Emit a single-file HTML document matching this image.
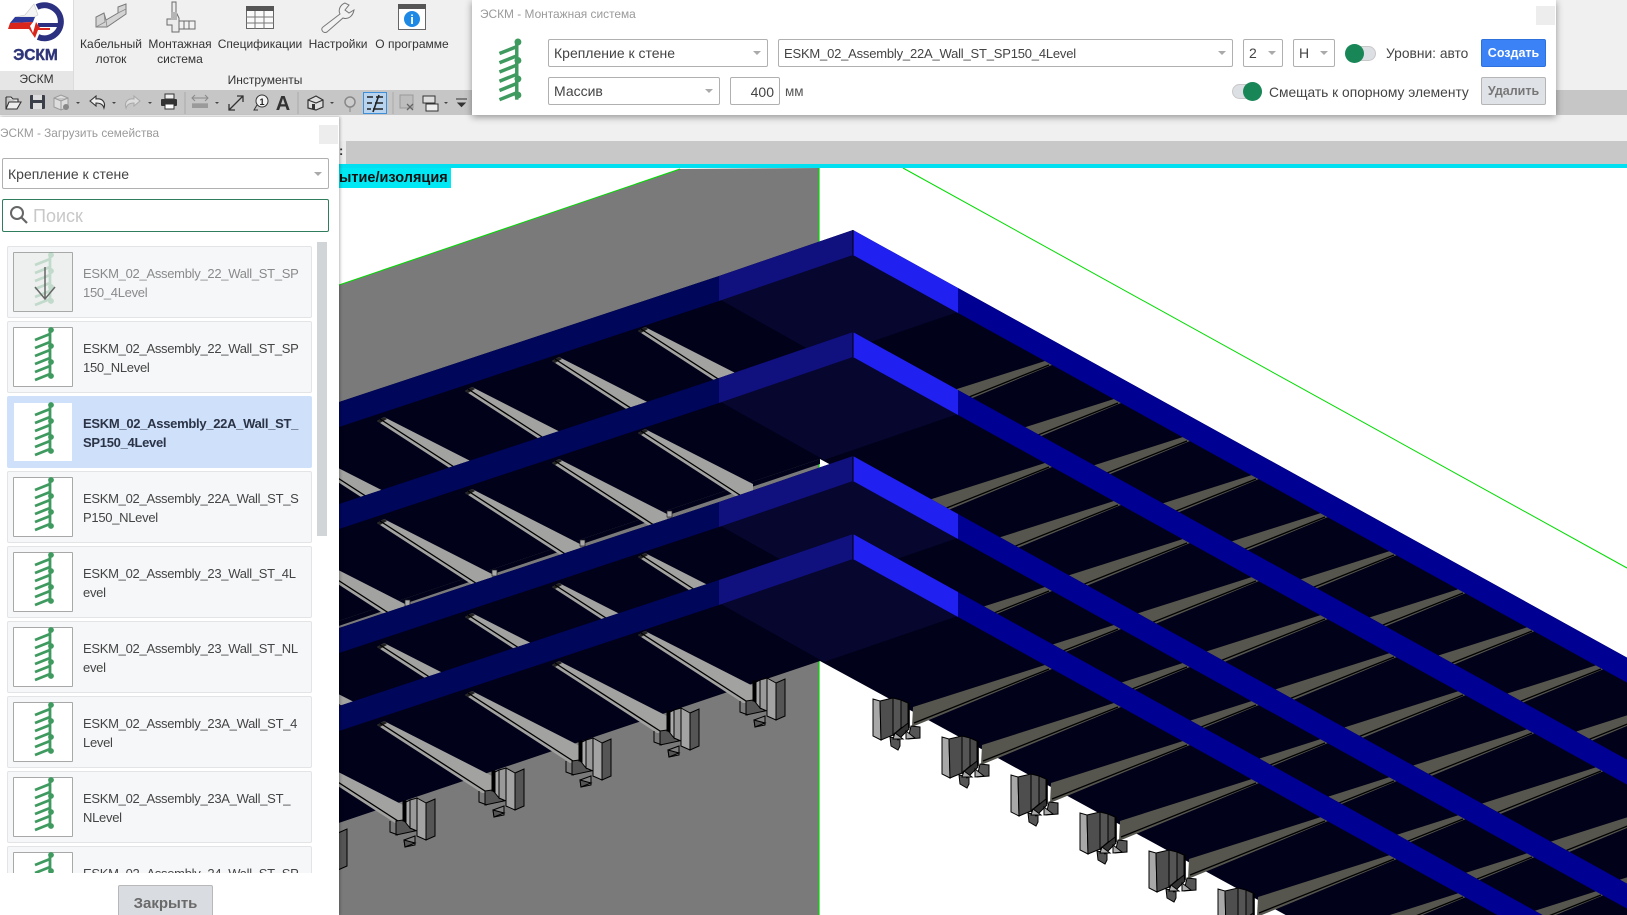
<!DOCTYPE html>
<html lang="ru"><head><meta charset="utf-8"><title>ЭСКМ</title>
<style>
html,body{margin:0;padding:0;width:1627px;height:915px;overflow:hidden;background:#f0f0f0}
body{position:relative;font-family:"Liberation Sans","Noto Sans CJK SC",sans-serif;color:#333}
.a{position:absolute}
.t{position:absolute;white-space:nowrap;line-height:16px}
.c{text-align:center}
.rb{font-size:12px;color:#333}
.box{position:absolute;box-sizing:border-box;background:#fff;border:1px solid #b0b0b0;border-radius:2px;font-size:14px;color:#444;white-space:nowrap;overflow:hidden}
.car{position:absolute;width:0;height:0;border-left:4px solid transparent;border-right:4px solid transparent;border-top:4px solid #aaa}
.it{position:absolute;left:7px;width:305px;height:72px;box-sizing:border-box;background:#f6f7f9;border:1px solid #e3e4e6;border-radius:2px;overflow:hidden}
.it .th{position:absolute;left:5px;top:5px;width:60px;height:60px;box-sizing:border-box;background:#fff;border:1px solid #a8a8a8;border-radius:1px}
.it .tx{position:absolute;left:75px;top:18px;font-size:13px;letter-spacing:-.29px;line-height:18.7px;color:#444;white-space:nowrap}
.it svg{position:absolute;left:24px;top:4px}
</style></head>
<body>
<svg class="a" style="left:0;top:0" width="1627" height="915" viewBox="0 0 1627 915">
<defs>
<g id="lr"><polygon points="7,3 115,58 115,75 105,75 0,7" fill="#a2a2a0"/><polygon points="0,7 7,3 10,5 3,9" fill="#222"/><polyline points="3,5 108,73" stroke="#000" stroke-width="1.3" fill="none"/></g>
<g id="rr"><polygon points="40,9 172,-33 179,-29 39,29" fill="#56564e"/><polyline points="41,25 176,-29" stroke="#000" stroke-width="1.3" fill="none"/></g>
<g id="lrow">
<use href="#lr" x="638" y="628"/><use href="#lr" x="552" y="658"/><use href="#lr" x="465" y="688"/><use href="#lr" x="377" y="718"/><use href="#lr" x="290" y="748"/><use href="#lr" x="203" y="778"/>
</g>
<g id="rrow">
<use href="#rr" x="873" y="698"/><use href="#rr" x="942" y="736"/><use href="#rr" x="1011" y="774"/><use href="#rr" x="1080" y="812"/><use href="#rr" x="1149" y="850"/><use href="#rr" x="1218" y="888"/><use href="#rr" x="1287" y="926"/><use href="#rr" x="1356" y="964"/><use href="#rr" x="1425" y="1002"/><use href="#rr" x="1494" y="1040"/><use href="#rr" x="1563" y="1078"/><use href="#rr" x="1632" y="1116"/>
</g>
<g id="lvl">
<polygon points="300,719 719,580 853,534 1700,1002 1700,1141 820,661 300,836" fill="#010119"/>
<use href="#lrow"/><use href="#rrow"/>
<polygon points="853,559 958,616 824,662 719,603" fill="#06062e"/>
<polygon points="300,719 719,580 719,605 300,744" fill="#00065a"/>
<polygon points="719,580 853,534 853,559 719,605" fill="#10107e"/>
<polygon points="853,534 958,592 958,617 853,559" fill="#2020f0"/>
<polygon points="958,592 1700,1002 1700,1027 958,617" fill="#000092"/>
<line x1="853" y1="534" x2="853" y2="559" stroke="#000" stroke-width="1"/>
</g>
<g id="lb" stroke="#000" stroke-width="1">
<polygon points="-7,18 0,17 12,28 -7,32" fill="#555"/>
<polyline points="-13,18 -13,29 -5,32" fill="none"/>
<polygon points="1,37 12,33 12,42 2,44" fill="#808080"/>
<polygon points="1,37 12,40 2,44" fill="#555"/>
<polygon points="3,-1 7,-3 7,25 3,20" fill="#aaa"/>
<polygon points="7,-3 14,-5 14,28 7,25" fill="#999"/>
<polygon points="14,-5 23,0 23,37 14,33" fill="#a3a3a3"/>
<polygon points="23,0 32,-4 32,33 23,37" fill="#555"/>
<rect x="0" y="-2" width="3" height="20" fill="#000"/>
</g>
<g id="rbk" stroke="#000" stroke-width="1">
<polygon points="17,39 27,41 27,48 25,52 18,48" fill="#555"/>
<polygon points="38,28 47,29 47,40 35,41" fill="#555"/>
<polygon points="0,1 7,3 8,42 0,38" fill="#a8a8a8"/>
<polygon points="7,3 20,0 20,37 8,42" fill="#4e4e4e"/>
<polygon points="20,0 28,2 28,30 20,37" fill="#555"/>
<polygon points="28,2 35,5 35,27 28,30" fill="#4a4a4a"/>
<polygon points="20,37 35,25 36,31 25,42" fill="#333"/>
<polygon points="22,35 30,41 20,41" fill="#aaa"/>
<polygon points="33,33 42,40 33,41" fill="#aaa"/>
<line x1="36" y1="5" x2="36" y2="30" stroke-width="1.6"/>
</g>
</defs>
<rect x="0" y="168" width="1627" height="747" fill="#fff"/>
<polygon points="339,285 680,169 819,168 819,915 339,915" fill="#7a7a7a"/>
<polyline points="339,285 680,169" stroke="#00dc00" stroke-width="1" fill="none"/>
<line x1="819" y1="168" x2="819" y2="915" stroke="#00dc00" stroke-width="1.2"/>
<line x1="903" y1="168" x2="1627" y2="568" stroke="#00dc00" stroke-width="1"/>
<use href="#lvl" y="-304"/>
<polygon points="300,634 820,459 820,464 300,639" fill="#010119"/>
<use href="#lvl" y="-202"/>
<g fill="#aaa" stroke="#222" stroke-width=".7"><rect x="405" y="600" width="5" height="6"/><rect x="492" y="570" width="5" height="6"/><rect x="580" y="540" width="5" height="6"/><rect x="667" y="511" width="5" height="6"/></g>
<use href="#lvl" y="-78"/>
<use href="#lvl"/>
<use href="#lb" x="315" y="833"/><use href="#lb" x="403" y="803"/><use href="#lb" x="492" y="773"/><use href="#lb" x="579" y="743"/><use href="#lb" x="667" y="713"/><use href="#lb" x="753" y="683"/>
<use href="#rbk" x="873" y="698"/><use href="#rbk" x="942" y="736"/><use href="#rbk" x="1011" y="774"/><use href="#rbk" x="1080" y="812"/><use href="#rbk" x="1149" y="850"/><use href="#rbk" x="1218" y="888"/>
</svg>

<!-- chrome strips -->
<div class="a" style="left:0;top:0;width:1627px;height:90px;background:#f0f0f0"></div>
<div class="a" style="left:0;top:90px;width:1627px;height:25px;background:#c6c6c6"></div>
<div class="a" style="left:0;top:115px;width:1627px;height:26px;background:#f0f0f0"></div>
<div class="a" style="left:339px;top:141px;width:1288px;height:23px;background:#c8c8c8"></div>
<div class="a" style="left:339px;top:141px;width:7px;height:23px;background:#ececec"></div>
<div class="a" style="left:0;top:164px;width:1627px;height:4px;background:#00e0f0"></div>
<div class="a" style="left:339px;top:168px;width:112px;height:20px;background:#00e8f4"></div>
<div class="t" style="left:339px;top:170px;font-size:14.5px;font-weight:bold;color:#111">ытие/изоляция</div>
<div class="t" style="left:339px;top:143px;font-size:13px;font-weight:bold;color:#333">:</div>

<!-- ribbon -->
<div class="a" style="left:0;top:0;width:73px;height:71px;background:#fff"></div>
<div class="a" style="left:0;top:71px;width:73px;height:19px;background:#e6e6e6"></div>
<div class="a" style="left:73px;top:0;width:1px;height:90px;background:#dcdcdc"></div>
<div class="t rb c" style="left:0;top:71px;width:73px">ЭСКМ</div>
<div class="t rb c" style="left:70px;top:36px;width:82px">Кабельный</div>
<div class="t rb c" style="left:70px;top:51px;width:82px">лоток</div>
<div class="t rb c" style="left:140px;top:36px;width:80px">Монтажная</div>
<div class="t rb c" style="left:140px;top:51px;width:80px">система</div>
<div class="t rb c" style="left:215px;top:36px;width:90px">Спецификации</div>
<div class="t rb c" style="left:300px;top:36px;width:76px">Настройки</div>
<div class="t rb c" style="left:369px;top:36px;width:86px">О программе</div>
<div class="t rb c" style="left:200px;top:72px;width:130px">Инструменты</div>

<svg class="a" style="left:0;top:0" width="472" height="116" viewBox="0 0 472 116">
<!-- logo -->
<path d="M37 7 A16.500 16.500 0 1 1 38 37" fill="none" stroke="#2b3080" stroke-width="6"/>
<path d="M38 25 H60" stroke="#2b3080" stroke-width="4"/>
<polygon points="15,17 25,15 34,4 38,15 34,17" fill="#f4f4f4" stroke="#c8c8c8" stroke-width=".6"/>
<polygon points="15,17 35,17 33,22 10,23" fill="#2d3a9a"/>
<polygon points="10,23 33,22 30,26 33,33 36,22 40,28 50,28 50,30 38,30 35,38 29,29 8,29" fill="#d8261c"/>
<text x="35.500" y="60" text-anchor="middle" font-family="Liberation Sans,sans-serif" font-weight="bold" font-size="15.500" fill="#2e3578" stroke="#2e3578" stroke-width=".4">ЭСКМ</text>
<!-- tray -->
<path d="M96 27 L96 17 L104 13 L106 20 L118 13 L118 7 L126 4 L126 14 L107 27 Z" fill="#d4d4d4" stroke="#7a7a7a" stroke-width="1"/>
<path d="M104 13 L105 22 L96 27 M106 20 L107 27 M118 13 L126 9" fill="none" stroke="#8a8a8a" stroke-width=".8"/>
<!-- assembly -->
<path d="M172 2 H176 V12 L179 18 V32 H172 V25 H167 V19 H172 V12 Z" fill="#ececec" stroke="#6a6a6a" stroke-width="1"/>
<rect x="179" y="21" width="16" height="8" fill="#f2f2f2" stroke="#6a6a6a"/>
<path d="M184 21 V29 M189 21 V29" stroke="#6a6a6a"/>
<rect x="171" y="12" width="6" height="8" fill="#b5b5b5"/>
<!-- table -->
<rect x="246.500" y="6.500" width="27" height="22" fill="#fafafa" stroke="#666"/>
<rect x="246" y="6" width="28" height="5" fill="#555"/>
<path d="M246 17 H274 M246 23 H274 M255 11 V29 M264 11 V29" stroke="#777" stroke-width="1"/>
<!-- wrench -->
<path d="M345 3 C340 5 338 10 340 14 L323 27 C320 29 323 34 327 32 L343 18 C348 20 353 16 354 10 L349 13 L345 10 L349 5 Z" fill="#f2f2f2" stroke="#777" stroke-width="1"/>
<!-- info -->
<rect x="398.500" y="4.500" width="27" height="25" fill="#fff" stroke="#666"/>
<rect x="398" y="4" width="28" height="5" fill="#555"/>
<circle cx="412" cy="19" r="8" fill="#1e88e5"/>
<text x="412" y="24" text-anchor="middle" font-family="Liberation Sans,sans-serif" font-weight="bold" font-size="13" fill="#fff">i</text>
<!-- QAT -->
<path d="M6 97 H11 L13 99 H18 V102 M6 97 V109 H17 L21 102 H9 L6 109" fill="#eee" stroke="#333" stroke-width="1.1"/>
<rect x="30" y="95" width="15" height="14" rx="1" fill="#3a3f4a"/><rect x="33" y="95" width="9" height="5" fill="#ddd"/><rect x="33" y="103" width="9" height="6" fill="#ddd"/>
<path d="M54 98 L61 95 L68 98 V107 L61 110 L54 107 Z M54 98 L61 101 L68 98 M61 101 V110" fill="#ddd" stroke="#9a9a9a"/>
<circle cx="66" cy="107" r="3" fill="#888"/>
<path d="M90 101 L96 96 V99 C102 98 106 102 104 108 C103 104 100 103 96 103 V106 Z" fill="#eee" stroke="#333" stroke-width="1.1"/>
<path d="M140 101 L134 96 V99 C128 98 124 102 126 108 C127 104 130 103 134 103 V106 Z" fill="#ddd" stroke="#aaa" stroke-width="1.1"/>
<rect x="165" y="94" width="9" height="5" fill="#eee" stroke="#333"/><rect x="161" y="99" width="16" height="7" rx="1" fill="#333"/><rect x="165" y="104" width="9" height="5" fill="#fff" stroke="#333"/>
<path d="M76 102 h4 l-2 2z M112 102 h4 l-2 2z M148 102 h4 l-2 2z M215 102 h4 l-2 2z M330 102 h4 l-2 2z M444 102 h4 l-2 2z" fill="#444"/>
<path d="M185 92 V114 M298 92 V114 M393 92 V114" stroke="#aaa"/>
<path d="M192 98 H208 M192 104 H208 M195 95 L192 98 L195 101 M205 95 L208 98 L205 101" fill="none" stroke="#8a8a8a"/><rect x="192" y="104" width="16" height="4" fill="#9a9a9a"/>
<path d="M229 110 L243 96 M237 96 H243 V102 M229 104 V110 H235" fill="none" stroke="#333" stroke-width="1.3"/>
<circle cx="262" cy="101" r="6" fill="#f2f2f2" stroke="#333"/><path d="M257 105 L254 110 H258" fill="none" stroke="#333"/>
<text x="262" y="105" text-anchor="middle" font-family="Liberation Sans,sans-serif" font-size="9" font-weight="bold" fill="#222">1</text>
<text x="283" y="110" text-anchor="middle" font-family="Liberation Sans,sans-serif" font-size="20" font-weight="bold" fill="#333">A</text>
<path d="M316 96 L308 100 V108 L316 110 L323 107 V100 Z M308 100 L316 103 L323 100" fill="#ddd" stroke="#333" stroke-width="1.2"/><rect x="312" y="104" width="3" height="5" fill="#333"/>
<circle cx="350" cy="102" r="5" fill="#ccc" stroke="#888" stroke-width="1.5"/><path d="M350 107 V112" stroke="#888"/>
<rect x="363.500" y="92.500" width="23" height="21" fill="#b9d4ef" stroke="#3f8fd8"/>
<path d="M367 97 H373 M367 103 H372 M367 109 H371 M376 97 H383 M375 103 H383 M373 109 H383 M379 95 L373 112" stroke="#222" stroke-width="1.6"/>
<rect x="400" y="95" width="13" height="13" fill="#bdbdbd" stroke="#999"/><path d="M407 104 L413 110 M413 104 L407 110" stroke="#666" stroke-width="1.3"/>
<rect x="423" y="96" width="12" height="7" fill="#ddd" stroke="#333"/><rect x="426" y="104" width="12" height="7" fill="#eee" stroke="#333"/>
<path d="M456 99 H467 M458 103 h7 l-3.500 3.500z" fill="#333" stroke="#333"/>
</svg>

<!-- right dialog -->
<div class="a" style="left:472px;top:0;width:1084px;height:115px;background:#fff;box-shadow:0 2px 7px rgba(0,0,0,.4)">
  <div class="t" style="left:8px;top:6px;font-size:11.900px;color:#9a9a9a">ЭСКМ - Монтажная система</div>
  <div class="a" style="left:1064px;top:6px;width:19px;height:19px;background:#ededed"></div>
  <svg class="a" style="left:24px;top:38px" width="30" height="68" viewBox="0 0 26 56"><g stroke="#3f9a5f" stroke-width="3" fill="#3f9a5f"><line x1="18" y1="1" x2="18" y2="52"/><line x1="3" y1="12" x2="18" y2="6"/><line x1="3" y1="20" x2="18" y2="14"/><line x1="3" y1="28" x2="18" y2="22"/><line x1="3" y1="36" x2="18" y2="30"/><line x1="3" y1="44" x2="18" y2="38"/><line x1="3" y1="52" x2="18" y2="46"/><circle cx="19" cy="2" r="1.500"/><circle cx="19" cy="18" r="1.500"/><circle cx="19" cy="34" r="1.500"/><circle cx="19" cy="48" r="1.500"/></g></svg>
  <div class="box" style="left:76px;top:39px;width:220px;height:28px;padding:5px 5px;line-height:17px">Крепление к стене<span class="car" style="right:6px;top:11px"></span></div>
  <div class="box" style="left:306px;top:39px;width:455px;height:28px;padding:5px 5px;line-height:17px;font-size:13px;letter-spacing:-.2px">ESKM_02_Assembly_22A_Wall_ST_SP150_4Level<span class="car" style="right:6px;top:11px"></span></div>
  <div class="box" style="left:771px;top:39px;width:40px;height:28px;padding:5px 5px;line-height:17px">2<span class="car" style="right:6px;top:11px"></span></div>
  <div class="box" style="left:821px;top:39px;width:42px;height:28px;padding:5px 5px;line-height:17px">Н<span class="car" style="right:6px;top:11px"></span></div>
  <div class="a" style="left:874px;top:46px;width:30px;height:15px;border-radius:8px;background:#dcdfe3;border:1px solid #c8c8c8;box-sizing:border-box"></div>
  <div class="a" style="left:873px;top:44px;width:19px;height:19px;border-radius:50%;background:#188656"></div>
  <div class="t" style="left:914px;top:46px;font-size:13.800px;color:#444">Уровни: авто</div>
  <div class="a" style="left:1009px;top:39px;width:65px;height:28px;box-sizing:border-box;background:#3b82f6;border:1px solid #2e70dc;border-radius:2px;color:#fff;font-size:12.500px;font-weight:bold;text-align:center;line-height:26px">Создать</div>
  <div class="box" style="left:76px;top:77px;width:172px;height:28px;padding:5px 5px;line-height:17px">Массив<span class="car" style="right:6px;top:11px"></span></div>
  <div class="box" style="left:258px;top:77px;width:50px;height:28px;padding:6px 5px 0 0;line-height:17px;text-align:right">400</div>
  <div class="t" style="left:313px;top:84px;font-size:13.500px;color:#555">мм</div>
  <div class="a" style="left:760px;top:84px;width:30px;height:15px;border-radius:8px;background:#dcdfe3;border:1px solid #c8c8c8;box-sizing:border-box"></div>
  <div class="a" style="left:771px;top:82px;width:19px;height:19px;border-radius:50%;background:#188656"></div>
  <div class="t" style="left:797px;top:85px;font-size:13.800px;color:#444">Смещать к опорному элементу</div>
  <div class="a" style="left:1009px;top:77px;width:65px;height:28px;box-sizing:border-box;background:#dfe2e6;border:1px solid #b5b5b5;border-radius:2px;color:#777;font-size:12.500px;font-weight:bold;text-align:center;line-height:26px">Удалить</div>
</div>

<!-- left dialog -->
<div class="a" style="left:0;top:117px;width:339px;height:798px;background:#fff;box-shadow:1px 0 3px rgba(0,0,0,.3);overflow:hidden">
  <div class="t" style="left:0;top:8px;font-size:11.800px;color:#9a9a9a">ЭСКМ - Загрузить семейства</div>
  <div class="a" style="left:319px;top:8px;width:19px;height:19px;background:#ededed"></div>
  <div class="box" style="left:2px;top:41px;width:327px;height:31px;padding:6px 5px;line-height:18px;font-size:14px">Крепление к стене<span class="car" style="right:6px;top:13px"></span></div>
  <div class="box" style="left:2px;top:82px;width:327px;height:33px;border-color:#2f7d5c"></div>
  <svg class="a" style="left:9px;top:88px" width="20" height="20" viewBox="0 0 20 20"><circle cx="8" cy="8" r="6" fill="none" stroke="#666" stroke-width="2"/><line x1="12.500" y1="12.500" x2="18" y2="18" stroke="#666" stroke-width="2.200"/></svg>
  <div class="t" style="left:33px;top:89px;font-size:18px;line-height:20px;color:#c8c8c8">Поиск</div>
  <div class="a" style="left:317px;top:125px;width:10px;height:294px;background:#d2d5d8"></div>

  <div class="a" style="left:0;top:125px;width:315px;height:631px;overflow:hidden">
    <svg width="0" height="0" style="position:absolute"><defs><g id="ic" stroke="#3f9a5f" stroke-width="2.800" fill="#3f9a5f"><line x1="18" y1="2" x2="18" y2="50"/><line x1="3" y1="12" x2="18" y2="6"/><line x1="3" y1="20" x2="18" y2="14"/><line x1="3" y1="28" x2="18" y2="22"/><line x1="3" y1="36" x2="18" y2="30"/><line x1="3" y1="44" x2="18" y2="38"/><line x1="3" y1="52" x2="18" y2="46"/><circle cx="19" cy="2" r="1.500"/><circle cx="19" cy="18" r="1.500"/><circle cx="19" cy="34" r="1.500"/><circle cx="19" cy="48" r="1.500"/></g></defs></svg>
    <div class="it" style="top:4px"><div class="th" style="background:#eef0f0"></div><svg width="26" height="60" viewBox="0 0 26 56" style="opacity:.25"><use href="#ic"/></svg><svg width="26" height="60" viewBox="0 0 26 56"><path d="M13 14 V46 M3 34 L13 46 L23 34" fill="none" stroke="#666" stroke-width="1.500"/></svg><div class="tx" style="color:#8a8a8a">ESKM_02_Assembly_22_Wall_ST_SP<br>150_4Level</div></div>
    <div class="it" style="top:79px"><div class="th"></div><svg width="26" height="60" viewBox="0 0 26 56"><use href="#ic"/></svg><div class="tx">ESKM_02_Assembly_22_Wall_ST_SP<br>150_NLevel</div></div>
    <div class="it" style="top:154px;background:#cfe0fb;border-color:#cfe0fb"><div class="th" style="border-color:#cfe0fb"></div><svg width="26" height="60" viewBox="0 0 26 56"><use href="#ic"/></svg><div class="tx" style="font-weight:bold;color:#2b3446">ESKM_02_Assembly_22A_Wall_ST_<br>SP150_4Level</div></div>
    <div class="it" style="top:229px"><div class="th"></div><svg width="26" height="60" viewBox="0 0 26 56"><use href="#ic"/></svg><div class="tx">ESKM_02_Assembly_22A_Wall_ST_S<br>P150_NLevel</div></div>
    <div class="it" style="top:304px"><div class="th"></div><svg width="26" height="60" viewBox="0 0 26 56"><use href="#ic"/></svg><div class="tx">ESKM_02_Assembly_23_Wall_ST_4L<br>evel</div></div>
    <div class="it" style="top:379px"><div class="th"></div><svg width="26" height="60" viewBox="0 0 26 56"><use href="#ic"/></svg><div class="tx">ESKM_02_Assembly_23_Wall_ST_NL<br>evel</div></div>
    <div class="it" style="top:454px"><div class="th"></div><svg width="26" height="60" viewBox="0 0 26 56"><use href="#ic"/></svg><div class="tx">ESKM_02_Assembly_23A_Wall_ST_4<br>Level</div></div>
    <div class="it" style="top:529px"><div class="th"></div><svg width="26" height="60" viewBox="0 0 26 56"><use href="#ic"/></svg><div class="tx">ESKM_02_Assembly_23A_Wall_ST_<br>NLevel</div></div>
    <div class="it" style="top:604px;height:40px"><div class="th"></div><svg width="26" height="60" viewBox="0 0 26 56"><use href="#ic"/></svg><div class="tx" style="height:19px;overflow:hidden">ESKM_02_Assembly_24_Wall_ST_SP</div></div>
  </div>
  <div class="a" style="left:118px;top:768px;width:95px;height:30px;box-sizing:border-box;background:#d9dde1;border:1px solid #b8b8b8;border-bottom:0;border-radius:2px 2px 0 0;color:#6a6a6a;font-size:15px;font-weight:bold;text-align:center;padding-top:9px;line-height:18px;overflow:hidden">Закрыть</div>
</div>
</body></html>
